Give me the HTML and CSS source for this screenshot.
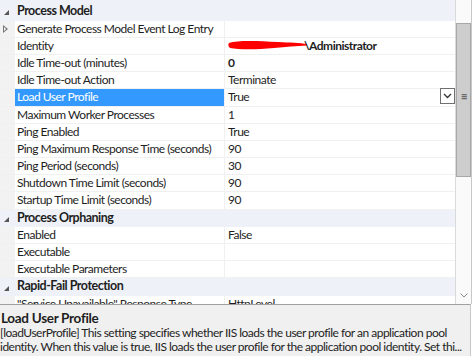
FILE: index.html
```html
<!DOCTYPE html>
<html lang="en">
<head>
    <meta charset="UTF-8">
    <title>Advanced Settings</title>
    <link rel="stylesheet" href="styles.css">
</head>
<body>
    <div class="window">
        <div class="main">
            <div class="grid">
                <div class="row category first">
                    <span class="gutter"><span class="expanded"></span></span>
                    <span class="cat-label">Process Model</span>
                </div>
                <div class="row">
                    <span class="gutter"><span class="collapsed"></span></span>
                    <span class="label">Generate Process Model Event Log Entry</span>
                    <span class="value"></span>
                </div>
                <div class="row">
                    <span class="gutter"></span>
                    <span class="label">Identity</span>
                    <span class="value bold">
                        <svg class="scribble" width="80" height="12" viewBox="0 0 80 12">
                            <path d="M1 4 C 10 1, 30 2, 50 3 C 62 3.5, 72 4, 79 5 L 79 6.5 C 68 7, 58 8, 46 9 C 30 10.5, 12 11, 2 9 C 0 7.5, 0 5, 1 4 Z" fill="#f00"/>
                        </svg>\Administrator
                    </span>
                </div>
                <div class="row">
                    <span class="gutter"></span>
                    <span class="label">Idle Time-out (minutes)</span>
                    <span class="value bold">0</span>
                </div>
                <div class="row">
                    <span class="gutter"></span>
                    <span class="label">Idle Time-out Action</span>
                    <span class="value">Terminate</span>
                </div>
                <div class="row selected">
                    <span class="gutter"></span>
                    <span class="label">Load User Profile</span>
                    <span class="value">True
                        <span class="dropdown">
                            <svg width="9" height="6" viewBox="0 0 9 6"><path d="M1 1 L4.5 4.5 L8 1" fill="none" stroke="#333" stroke-width="1.3"/></svg>
                        </span>
                    </span>
                </div>
                <div class="row">
                    <span class="gutter"></span>
                    <span class="label">Maximum Worker Processes</span>
                    <span class="value">1</span>
                </div>
                <div class="row">
                    <span class="gutter"></span>
                    <span class="label">Ping Enabled</span>
                    <span class="value">True</span>
                </div>
                <div class="row">
                    <span class="gutter"></span>
                    <span class="label">Ping Maximum Response Time (seconds)</span>
                    <span class="value">90</span>
                </div>
                <div class="row">
                    <span class="gutter"></span>
                    <span class="label">Ping Period (seconds)</span>
                    <span class="value">30</span>
                </div>
                <div class="row">
                    <span class="gutter"></span>
                    <span class="label">Shutdown Time Limit (seconds)</span>
                    <span class="value">90</span>
                </div>
                <div class="row">
                    <span class="gutter"></span>
                    <span class="label">Startup Time Limit (seconds)</span>
                    <span class="value">90</span>
                </div>
                <div class="row category">
                    <span class="gutter"><span class="expanded"></span></span>
                    <span class="cat-label">Process Orphaning</span>
                </div>
                <div class="row">
                    <span class="gutter"></span>
                    <span class="label">Enabled</span>
                    <span class="value">False</span>
                </div>
                <div class="row">
                    <span class="gutter"></span>
                    <span class="label">Executable</span>
                    <span class="value"></span>
                </div>
                <div class="row">
                    <span class="gutter"></span>
                    <span class="label">Executable Parameters</span>
                    <span class="value"></span>
                </div>
                <div class="row category">
                    <span class="gutter"><span class="expanded"></span></span>
                    <span class="cat-label">Rapid-Fail Protection</span>
                </div>
                <div class="row">
                    <span class="gutter"></span>
                    <span class="label">"Service Unavailable" Response Type</span>
                    <span class="value">HttpLevel</span>
                </div>
            </div>
            <div class="scrollbar">
                <div class="track-top"></div>
                <div class="thumb">
                    <span class="grip">&#8801;</span>
                </div>
                <div class="track-bottom"></div>
                <div class="arrow-down">
                    <svg width="8" height="5" viewBox="0 0 8 5"><path d="M0.5 0.5 L4 4 L7.5 0.5" fill="none" stroke="#888" stroke-width="1"/></svg>
                </div>
            </div>
        </div>
        <div class="desc">
            <div class="desc-title">Load User Profile</div>
            <div class="desc-text">[loadUserProfile] This setting specifies whether IIS loads the user profile for an application pool</div>
            <div class="desc-text">identity. When this value is true, IIS loads the user profile for the application pool identity. Set thi...</div>
        </div>
    </div>
</body>
</html>
```

FILE: styles.css
```css
body {
    margin: 0;
    font-family: Lato, "Noto Sans", sans-serif;
    font-size: 12px;
    letter-spacing: -0.5px;
    color: #1e1e1e;
    background: #fff;
}
.window {
    width: 474px;
    height: 356px;
    overflow: hidden;
}
.main {
    display: flex;
    height: 304px;
}
.grid {
    width: 455px;
    overflow: hidden;
}
.row {
    display: grid;
    grid-template-columns: 15px 210px 1fr;
    height: 17.2px;
    box-sizing: border-box;
    border-bottom: 1px solid #f0f0f0;
    line-height: 16px;
}
.row.first {
    height: 20.6px;
    padding-top: 3.4px;
}
.gutter {
    background: #f2f2f2;
    display: flex;
    align-items: center;
    justify-content: center;
}
.category {
    background: #eef2f8;
    border-bottom: none;
}
.category .gutter {
    background: #eef2f8;
}
.cat-label {
    grid-column: 2 / 4;
    font-weight: bold;
    font-size: 12.5px;
    padding-left: 2px;
}
.label {
    padding-left: 2px;
    border-right: 1px solid #f0f0f0;
    white-space: nowrap;
    overflow: hidden;
}
.value {
    padding-left: 3px;
    white-space: nowrap;
    position: relative;
}
.bold {
    font-weight: bold;
}
.selected .label {
    background: #3399ff;
    color: #fff;
}
.expanded {
    width: 0;
    height: 0;
    border-left: 5px solid transparent;
    border-bottom: 5px solid #555;
    margin-left: -2px;
    margin-top: 2px;
}
.collapsed {
    width: 0;
    height: 0;
    border-top: 4px solid transparent;
    border-bottom: 4px solid transparent;
    border-left: 5px solid #777;
    position: relative;
    margin-left: -4px;
}
.collapsed::after {
    content: "";
    position: absolute;
    left: -4px;
    top: -2px;
    border-top: 2px solid transparent;
    border-bottom: 2px solid transparent;
    border-left: 2.5px solid #fff;
}
.scribble {
    vertical-align: -1px;
    margin-right: -4px;
}
.dropdown {
    position: absolute;
    right: 0;
    top: -1px;
    width: 15px;
    height: 16px;
    box-sizing: border-box;
    border: 1px solid #707070;
    background: #fff;
    display: flex;
    align-items: center;
    justify-content: center;
}
.scrollbar {
    width: 17px;
    display: flex;
    flex-direction: column;
    background: #fafafa;
    border-left: 1px solid #dadada;
    border-right: 1px solid #c8c8c8;
    box-sizing: border-box;
}
.track-top {
    height: 23px;
}
.thumb {
    height: 154px;
    background: #cdcdcd;
    border: 1px solid #a8a8a8;
    box-sizing: border-box;
    display: flex;
    justify-content: center;
    align-items: flex-start;
    padding-top: 67px;
    line-height: 12px;
    font-size: 12px;
    color: #555;
}
.grip {
    margin-left: 1px;
}
.track-bottom {
    flex: 1;
}
.arrow-down {
    height: 17px;
    display: flex;
    align-items: center;
    justify-content: center;
}
.desc {
    height: 52px;
    box-sizing: border-box;
    background: #f0f0f0;
    border-top: 1px solid #a0a0a0;
    border-right: 1px solid #c8c8c8;
    width: 473px;
    margin-left: -2px;
    padding-top: 5px;
}
.desc-title {
    font-weight: bold;
    font-size: 13.5px;
    letter-spacing: -0.3px;
    line-height: 16px;
    padding-left: 3px;
}
.desc-text {
    line-height: 14px;
    padding-left: 2px;
    white-space: nowrap;
    overflow: hidden;
}
```
